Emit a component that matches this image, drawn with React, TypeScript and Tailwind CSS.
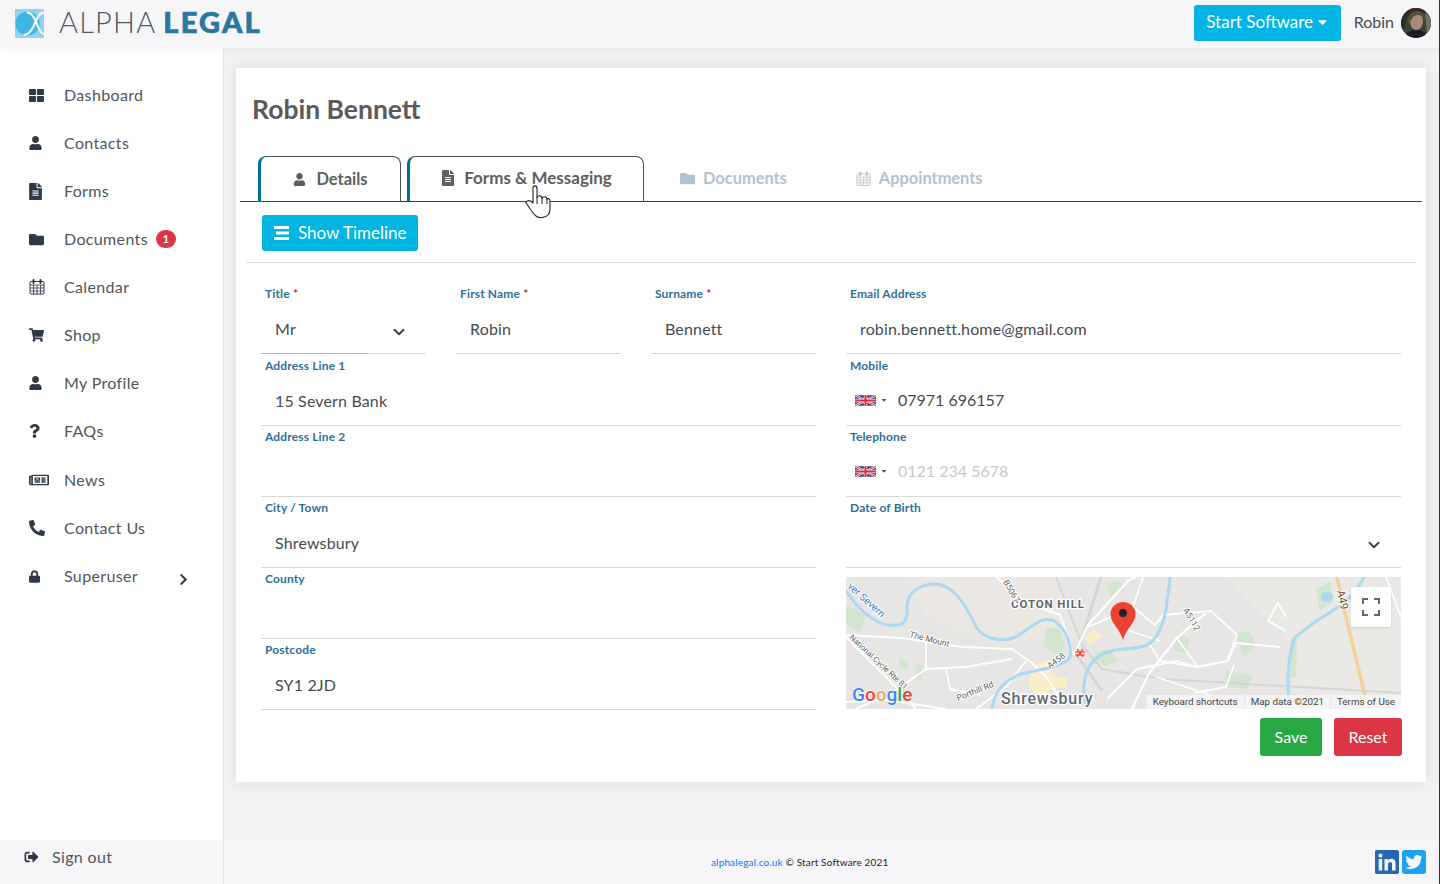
import { ChevronDown } from "lucide-react";
import {
  FaThLarge,
  FaUser,
  FaFileAlt,
  FaFolder,
  FaShoppingCart,
  FaQuestion,
  FaRegNewspaper,
  FaPhoneAlt,
  FaLock,
  FaChevronRight,
  FaSignOutAlt,
  FaLinkedin,
  FaTwitterSquare,
  FaCaretDown,
} from "react-icons/fa";

// font-awesome 4 style calendar, the package only has the newer ones
const CalendarIcon = ({ className }: { className?: string }) => (
  <svg viewBox="0 0 16 16" className={className} fill="none" stroke="currentColor" strokeWidth="1">
    <rect x="1" y="2.500" width="14" height="12.500" rx="1" />
    <path d="M1 6h14M1 9h14M1 12h14M4.500 6v9M8 6v9M11.500 6v9" strokeWidth="0.800" />
    <path d="M4.500 1v3M11.500 1v3" strokeWidth="2" strokeLinecap="round" />
  </svg>
);

const Logo = () => (
  <svg viewBox="0 0 30 30" className="h-[29px] w-[29px] shrink-0">
    <rect width="30" height="30" fill="#8fd3ef" />
    <circle cx="13" cy="15" r="12.500" fill="#41b5e4" />
    <path d="M30 3.500C25 4 23 9 20.500 15S15 27 9 27" fill="none" stroke="#f6f6f9" strokeWidth="2.200" />
    <path d="M12 3.500c6 0 8.500 5.500 10.500 11.500s4 10.500 7.500 11" fill="none" stroke="#f6f6f9" strokeWidth="2.200" />
  </svg>
);

const Avatar = () => (
  <svg viewBox="0 0 30 30" className="h-[30px] w-[30px] rounded-full">
    <rect width="30" height="30" fill="#3f4038" />
    <path d="M0 0h30v14c-3-6-3-6-4-8S8 2 6 10L3 22 0 20z" fill="#2a2e27" />
    <path d="M24 4l6 6v14l-4 2z" fill="#6d7560" />
    <path d="M9 13c0-5 4-8 7-8s6 3 6 8-3 9-6.500 9S9 18 9 13z" fill="#a58d7a" />
    <path d="M7 15C6 8 10 3 16 3s9 4 8 11c-1-4-3-7-7-7-4 0-7 3-8 9z" fill="#5c4c3c" />
    <path d="M4 30c1-6 6-8 11-8s10 2 11 8z" fill="#1e1f24" />
  </svg>
);

const UkFlag = () => (
  <svg viewBox="0 0 60 30" className="h-[11px] w-[21px]">
    <rect width="60" height="30" fill="#283f8a" />
    <path d="M0 0l60 30M60 0L0 30" stroke="#fff" strokeWidth="6" />
    <path d="M0 0l60 30M60 0L0 30" stroke="#d8283c" strokeWidth="2.500" />
    <path d="M30 0v30M0 15h60" stroke="#fff" strokeWidth="10" />
    <path d="M30 0v30M0 15h60" stroke="#d8283c" strokeWidth="6" />
  </svg>
);

const HandCursor = () => (
  <svg viewBox="0 0 26 33" className="absolute left-[267px] top-[-17px] h-[33px] w-[26px]">
    <path
      d="M0.500 17C3 15 6 15.500 8 18V3.500C8 0 12 0 12 3.500V12.500C13 10 17 10 17 13.500C18 11 22 11 22 14.500C23 13 25 13.500 25 16V24C25 29 22 32 17 32.500C12 33 10 30.500 7 26.500Z"
      fill="#fff"
      stroke="#222"
      strokeWidth="1.100"
      strokeLinejoin="round"
    />
    <path d="M12 12.500V19M17 13.500V19M22 14.500V19" stroke="#222" strokeWidth="1" fill="none" />
  </svg>
);

const navItems = [
  { label: "Dashboard", icon: <FaThLarge className="h-[15px] w-[15px]" /> },
  { label: "Contacts", icon: <FaUser className="h-[14px] w-[13px]" /> },
  { label: "Forms", icon: <FaFileAlt className="h-[17px] w-[13px]" /> },
  { label: "Documents", icon: <FaFolder className="h-[15px] w-[15px]" />, badge: "1" },
  { label: "Calendar", icon: <CalendarIcon className="h-[16px] w-[16px]" /> },
  { label: "Shop", icon: <FaShoppingCart className="h-[14px] w-[15px]" /> },
  { label: "My Profile", icon: <FaUser className="h-[14px] w-[13px]" /> },
  { label: "FAQs", icon: <FaQuestion className="h-[14px] w-[11px]" /> },
  { label: "News", icon: <FaRegNewspaper preserveAspectRatio="none" className="h-[14px] w-[20px]" />, nudge: true },
  { label: "Contact Us", icon: <FaPhoneAlt className="h-[16px] w-[16px]" /> },
  { label: "Superuser", icon: <FaLock className="h-[13px] w-[11px]" />, more: true },
];

const Field = ({
  label,
  value,
  required,
  className,
}: {
  label: string;
  value?: string;
  required?: boolean;
  className?: string;
}) => (
  <div className={`h-[71px] border-b border-[#d8d8d8] ${className ?? ""}`}>
    <div className="h-[22px] pl-1 pt-[3px] text-[12px] font-bold leading-[16px] tracking-[0.15px] text-[#2d6f96]">
      {label}
      {required && <span className="text-[#c0282f]"> *</span>}
    </div>
    <div className="mt-[14px] pl-[14px] text-[16px] leading-[20px] tracking-[0.15px] text-[#454b50]">{value}</div>
  </div>
);

const PhoneField = ({ label, value, placeholder }: { label: string; value: string; placeholder?: boolean }) => (
  <div className="h-[71px] border-b border-[#d8d8d8]">
    <div className="h-[22px] pl-1 pt-[3px] text-[12px] font-bold leading-[16px] tracking-[0.15px] text-[#2d6f96]">{label}</div>
    <div className="mt-[13px] flex items-center pl-[9px] text-[16px] leading-[20px]">
      <UkFlag />
      <FaCaretDown className="ml-[5px] h-[8px] w-[6px] text-[#555]" />
      <span className={`ml-[11px] ${placeholder ? "text-[#c8c8c8]" : "text-[#454b50]"}`}>{value}</span>
    </div>
  </div>
);

const MapView = () => (
  <div className="relative mt-[9px] h-[132px] overflow-hidden bg-[#e6e5e3]">
    <svg viewBox="0 0 555 132" className="h-full w-full">
      <rect width="555" height="132" fill="#e7e6e4" />
      <path d="M60 0H210L230 60 150 68 80 40z" fill="#ebe8e3" />
      <path d="M380 0H555V132H450L440 60z" fill="#ebe9e5" />
      {/* parks */}
      <g fill="#d2e6cf">
        <path d="M200 50l14 2 6 20-12 6-10-8zM0 28l20 10-6 18L0 48zM55 80l8 8-4 6-7-6zM70 88l6 0 1 14-6 2zM248 75l16-3 8 12-14 6zM260 6l14-2 4 10-14 6zM333 56l10 6-2 14-12-2-4-8zM388 56l16-2 6 14-12 12zM380 94l26 4-4 14-22-2z" />
        <path d="M470 12l14-8 4 20-14 10zM445 60l6 0-1 40-6 2z" />
      </g>
      {/* yellow town centre */}
      <path d="M188 88l14-4 4 14 16 4-2 8-16 2-6 8-10-4-6-10zM238 60l10-8 8 8-12 8z" fill="#fbefc9" />
      {/* rail */}
      <path d="M210 0l26 68 20 24 60 10 240 14" fill="none" stroke="#d3d5d7" strokeWidth="2" />
      <path d="M255 0l-20 64M232 80l24 34" fill="none" stroke="#d3d5d7" strokeWidth="3" />
      {/* roads */}
      <g fill="none" stroke="#fff" strokeWidth="1.800" strokeLinejoin="round">
        <path d="M0 58l56 3 60 9 50 2 20 14 16 16 14 24" />
        <path d="M166 82l-46 8-40 2-34 24-36 16" strokeWidth="2" />
        <path d="M0 60l60 60 10 12M130 132l30-22 20-26M100 92l4 20 30 6M80 64v30" />
        <path d="M150 0l30 26 34 12 14 40M228 78l14-30 40-44 8-4" strokeWidth="2.200" />
        <path d="M0 125l40-2 60 9M242 50l32-14 10 18 30 10" />
        <path d="M297 0l-10 30 22 18 8-10 48-4 26 24-10 26-30 6-20-6-40 8-30 30" />
        <path d="M360 36l-30 26-28 36-16 34" strokeWidth="2.400" />
        <path d="M330 60l22 30 30-6 8-18 44 4M440 40l-8-14-10 18 18 10" />
        <path d="M352 90l-38-6-10-16M310 100l60 20 20 12M540 0l15 40" />
        <path d="M388 88l-8 22-32 6" />
      </g>
      {/* rivers */}
      <g fill="none" stroke="#a9d8f2" strokeWidth="3" strokeLinecap="round">
        <path d="M0 14C14 34 28 46 42 48 58 50 62 44 61 32 60 18 70 8 88 7 108 6 122 32 130 50 138 62 156 66 170 60 186 50 196 38 208 44 222 52 226 72 224 80 216 92 190 92 172 98 154 106 148 118 146 132" />
        <path d="M241 131c-6-20-4-40 12-52 12-8 30-6 46-10 12-4 20-24 22-44 1-10 3-18 3-25" strokeWidth="3" />
        <path d="M444 130c-4-20-2-50 4-68 10-12 36-26 50-36 8-8 14-14 20-26" />
      </g>
      <ellipse cx="481" cy="20" rx="6" ry="5" fill="#a9d8f2" />
      {/* A49 */}
      <path d="M491 0C497 30 505 60 512 90L522 132" fill="none" stroke="#f5cf98" strokeWidth="3.500" />
      {/* station */}
      <path d="M229 75h10M229 78h10M231 72l6 8M237 72l-6 8" stroke="#ef2b2d" strokeWidth="1.200" />
      {/* labels */}
      <g fontFamily="Roboto, sans-serif" fill="#5f6672" stroke="#fff" strokeWidth="2.500" paintOrder="stroke">
        <text x="165" y="31" fontSize="11.500" fontWeight="700" letterSpacing="0.900">COTON HILL</text>
        <text x="155" y="127" fontSize="16" fontWeight="500" letterSpacing="0.800">Shrewsbury</text>
      </g>
      <g fontFamily="Roboto, sans-serif" fontSize="8.500" fill="#5f5f5f" stroke="#fff" strokeWidth="2" paintOrder="stroke">
        <text transform="translate(63 60) rotate(14)">The Mount</text>
        <text transform="translate(3 61) rotate(43)" fontSize="8">National Cycle Rte 81</text>
        <text transform="translate(204 92) rotate(-38)">A458</text>
        <text transform="translate(112 124) rotate(-22)">Porthill Rd</text>
        <text transform="translate(157 5) rotate(60)">B5067</text>
        <text transform="translate(337 33) rotate(60)">A5112</text>
        <text transform="translate(491 14) rotate(78)" fill="#6b4a20" fontSize="11">A49</text>
      </g>
      <text transform="translate(1 10) rotate(42)" fontFamily="Roboto, sans-serif" fontSize="10" fill="#3c7fb5" stroke="#fff" strokeWidth="2" paintOrder="stroke">
        ver Severn
      </text>
      {/* pin */}
      <path d="M277 25c-7 0-12.500 5-12.500 12 0 9 9 14 12.500 26 3.500-12 12.500-17 12.500-26 0-7-5.500-12-12.500-12z" fill="#ea4335" />
      <circle cx="277" cy="36" r="4" fill="#222" />
      {/* google */}
      <text x="6" y="124" fontFamily="Roboto, sans-serif" fontSize="19" fontWeight="500" stroke="#fff" strokeWidth="1" paintOrder="stroke">
        <tspan fill="#4285f4">G</tspan>
        <tspan fill="#ea4335">o</tspan>
        <tspan fill="#e3a857">o</tspan>
        <tspan fill="#4285f4">g</tspan>
        <tspan fill="#34a853">l</tspan>
        <tspan fill="#ea4335">e</tspan>
      </text>
    </svg>
    <div className="absolute bottom-0 right-0 flex h-[14px] items-center gap-px font-['Roboto',sans-serif] text-[9.800px] leading-[14px] text-[#444]">
      <span className="bg-[#f5f5f5]/90 px-[6px]">Keyboard shortcuts</span>
      <span className="bg-[#f5f5f5]/90 px-[6px]">Map data ©2021</span>
      <span className="bg-[#f5f5f5]/90 px-[6px]">Terms of Use</span>
    </div>
    <div className="absolute right-[10px] top-[10px] flex h-[40px] w-[40px] items-center justify-center rounded-[2px] bg-white shadow-sm">
      <svg viewBox="0 0 18 18" className="h-[18px] w-[18px]" fill="none" stroke="#666" strokeWidth="2">
        <path d="M1 6V1h5M12 1h5v5M17 12v5h-5M6 17H1v-5" />
      </svg>
    </div>
  </div>
);

export default function App() {
  return (
    <div className="flex h-[884px] flex-col overflow-hidden border-r border-[#333] bg-[#f1f1f2] font-['Lato',sans-serif] text-[#454b50]">
      <header className="z-10 flex h-12 shrink-0 items-center bg-[#f6f6f9] pb-[2px] pl-[15px] pr-[8px] shadow-[0_2px_6px_rgba(0,0,0,0.04)]">
        <Logo />
        <div className="mb-[3px] ml-[15px] text-[29px] font-light leading-none tracking-[1.200px] text-[#50585f]">ALPHA</div>
        <div className="mb-[3px] ml-[7px] text-[29px] font-black leading-none tracking-[2.200px] text-[#2a789f] [-webkit-text-stroke:0.7px_#2a789f]">LEGAL</div>
        <button className="ml-auto flex h-[36px] w-[147px] items-center justify-center gap-1 rounded-[3px] bg-[#00b5e2] pb-[2px] text-[17px] text-white">
          Start Software
          <FaCaretDown className="h-[14px] w-[11px]" />
        </button>
        <span className="mb-[3px] ml-[13px] text-[16px] text-[#454b50]">Robin</span>
        <div className="ml-[7px]">
          <Avatar />
        </div>
      </header>

      <div className="flex min-h-0 flex-1">
        <aside className="flex w-[224px] shrink-0 flex-col border-r border-[#e4e4e6] bg-white">
          <nav className="flex-1 pl-[29px] pt-[23px]">
            {navItems.map((item) => (
              <div
                key={item.label}
                className={`flex h-[48px] items-center text-[#2f3a46] ${item.nudge ? "mt-px" : ""}`}
              >
                <span className="w-[35px] shrink-0">{item.icon}</span>
                <span className="text-[16px] tracking-[0.35px] text-[#50565c]">{item.label}</span>
                {item.badge && (
                  <span className="ml-[8px] flex h-[18px] w-[20px] items-center justify-center rounded-full bg-[#dc3545] text-[11px] font-bold text-white">
                    {item.badge}
                  </span>
                )}
                {item.more && <FaChevronRight className="ml-[41px] mt-[6px] h-[13px] w-[9px] text-[#2f3a46]" />}
              </div>
            ))}
          </nav>
          <div className="flex h-[44px] shrink-0 items-center bg-[#f6f6f9] pb-[10px] pl-6 text-[#2f3a46]">
            <FaSignOutAlt className="h-[14px] w-[15px]" />
            <span className="ml-[13px] text-[16px] tracking-[0.35px] text-[#50565c]">Sign out</span>
          </div>
        </aside>

        <main className="flex min-w-0 flex-1 flex-col">
          <div className="flex-1 pl-3 pr-[13px] pt-5">
            <section className="h-[714px] bg-white px-1 pt-[25px] shadow-[0_0_12px_rgba(0,0,0,0.08)]">
              <h1 className="pl-3 text-[26.500px] font-bold leading-8 text-[#5a5a5a]">Robin Bennett</h1>

              <div className="relative mt-[31px] flex h-[46px] border-b border-[#38424c] pl-[18px] text-[17px]">
                <div className="flex h-[46px] w-[143px] items-center justify-center gap-[10px] rounded-t-lg border border-b-0 border-l-[3px] border-[#4a5057] border-l-[#00709a] pb-[1px] text-[16.500px] font-bold text-[#5e5e5e]">
                  <FaUser className="h-[13px] w-[13px]" />
                  Details
                </div>
                <div className="relative ml-[6px] flex h-[46px] w-[237px] items-center justify-center gap-[9px] rounded-t-lg border border-b-0 border-l-[3px] border-[#4a5057] border-l-[#00709a] pb-[3px] font-bold text-[#5e5e5e]">
                  <FaFileAlt className="h-[16px] w-[14px]" />
                  Forms &amp; Messaging
                </div>
                <div className="ml-[36px] flex items-center gap-2 text-[16.400px] font-bold text-[#b4c2cf]">
                  <FaFolder className="h-[15px] w-[15px]" />
                  Documents
                </div>
                <div className="ml-[69px] flex items-center gap-2 text-[16.400px] font-bold text-[#b4c2cf]">
                  <CalendarIcon className="h-[16px] w-[15px]" />
                  Appointments
                </div>
                <div className="absolute left-[18px] top-[46px]">
                  <HandCursor />
                </div>
              </div>

              <div className="ml-[22px] mt-[13px] flex h-9 w-[156px] items-center rounded-[3px] bg-[#00b5e2] pl-3 text-[17px] text-white">
                <svg viewBox="0 0 16 14" className="mr-2 h-[14px] w-[16px]" fill="#fff">
                  <rect x="0" y="0" width="15" height="3" />
                  <rect x="2" y="5.500" width="13" height="3" />
                  <rect x="0" y="11" width="15" height="3" />
                </svg>
                Show Timeline
              </div>

              <div className="mx-[6px] mt-[11px] border-t border-[#dfdfdf]" />

              <div className="ml-[21px] mr-[21px] mt-5 grid grid-cols-2 gap-x-[30px]">
                <div>
                  <div className="grid grid-cols-3 gap-x-[30px]">
                    <div className="relative">
                      <Field label="Title" value="Mr" required />
                      <ChevronDown className="absolute right-[18px] top-[40px] h-[18px] w-[18px] text-[#3a4450]" strokeWidth={2.600} />
                      <div className="absolute bottom-0 left-0 h-px w-[107px] bg-[#b8b8b8]" />
                    </div>
                    <Field label="First Name" value="Robin" required />
                    <Field label="Surname" value="Bennett" required />
                  </div>
                  <Field className="mt-px" label="Address Line 1" value="15 Severn Bank" />
                  <Field label="Address Line 2" />
                  <Field label="City / Town" value="Shrewsbury" />
                  <Field label="County" />
                  <Field label="Postcode" value="SY1 2JD" />
                </div>
                <div>
                  <Field label="Email Address" value="robin.bennett.home@gmail.com" />
                  <div className="mt-px">
                    <PhoneField label="Mobile" value="07971 696157" />
                  </div>
                  <PhoneField label="Telephone" value="0121 234 5678" placeholder />
                  <div className="relative">
                    <Field label="Date of Birth" />
                    <ChevronDown className="absolute right-[18px] top-[39px] h-[18px] w-[18px] text-[#3a4450]" strokeWidth={2.600} />
                  </div>
                  <MapView />
                </div>
              </div>

              <div className="mr-5 mt-2 flex justify-end gap-3 text-[16px] text-white">
                <button className="h-[38px] w-[62px] rounded-[3px] bg-[#28a745]">Save</button>
                <button className="h-[38px] w-[68px] rounded-[3px] bg-[#dc3545]">Reset</button>
              </div>
            </section>
          </div>

          <footer className="flex h-[44px] shrink-0 items-center bg-[#f6f6f9] pl-[487px] pr-[13px]">
            <p className="text-[10px] tracking-[0.15px] text-[#222]">
              <span className="text-[#007bff]">alphalegal.co.uk</span> © Start Software 2021
            </p>
            <div className="ml-auto flex items-center">
              <FaLinkedin className="h-[28px] w-[24px] text-[#2867b2]" />
              <FaTwitterSquare className="ml-[3px] h-[28px] w-[24px] text-[#1da1f2]" />
            </div>
          </footer>
        </main>
      </div>
    </div>
  );
}
